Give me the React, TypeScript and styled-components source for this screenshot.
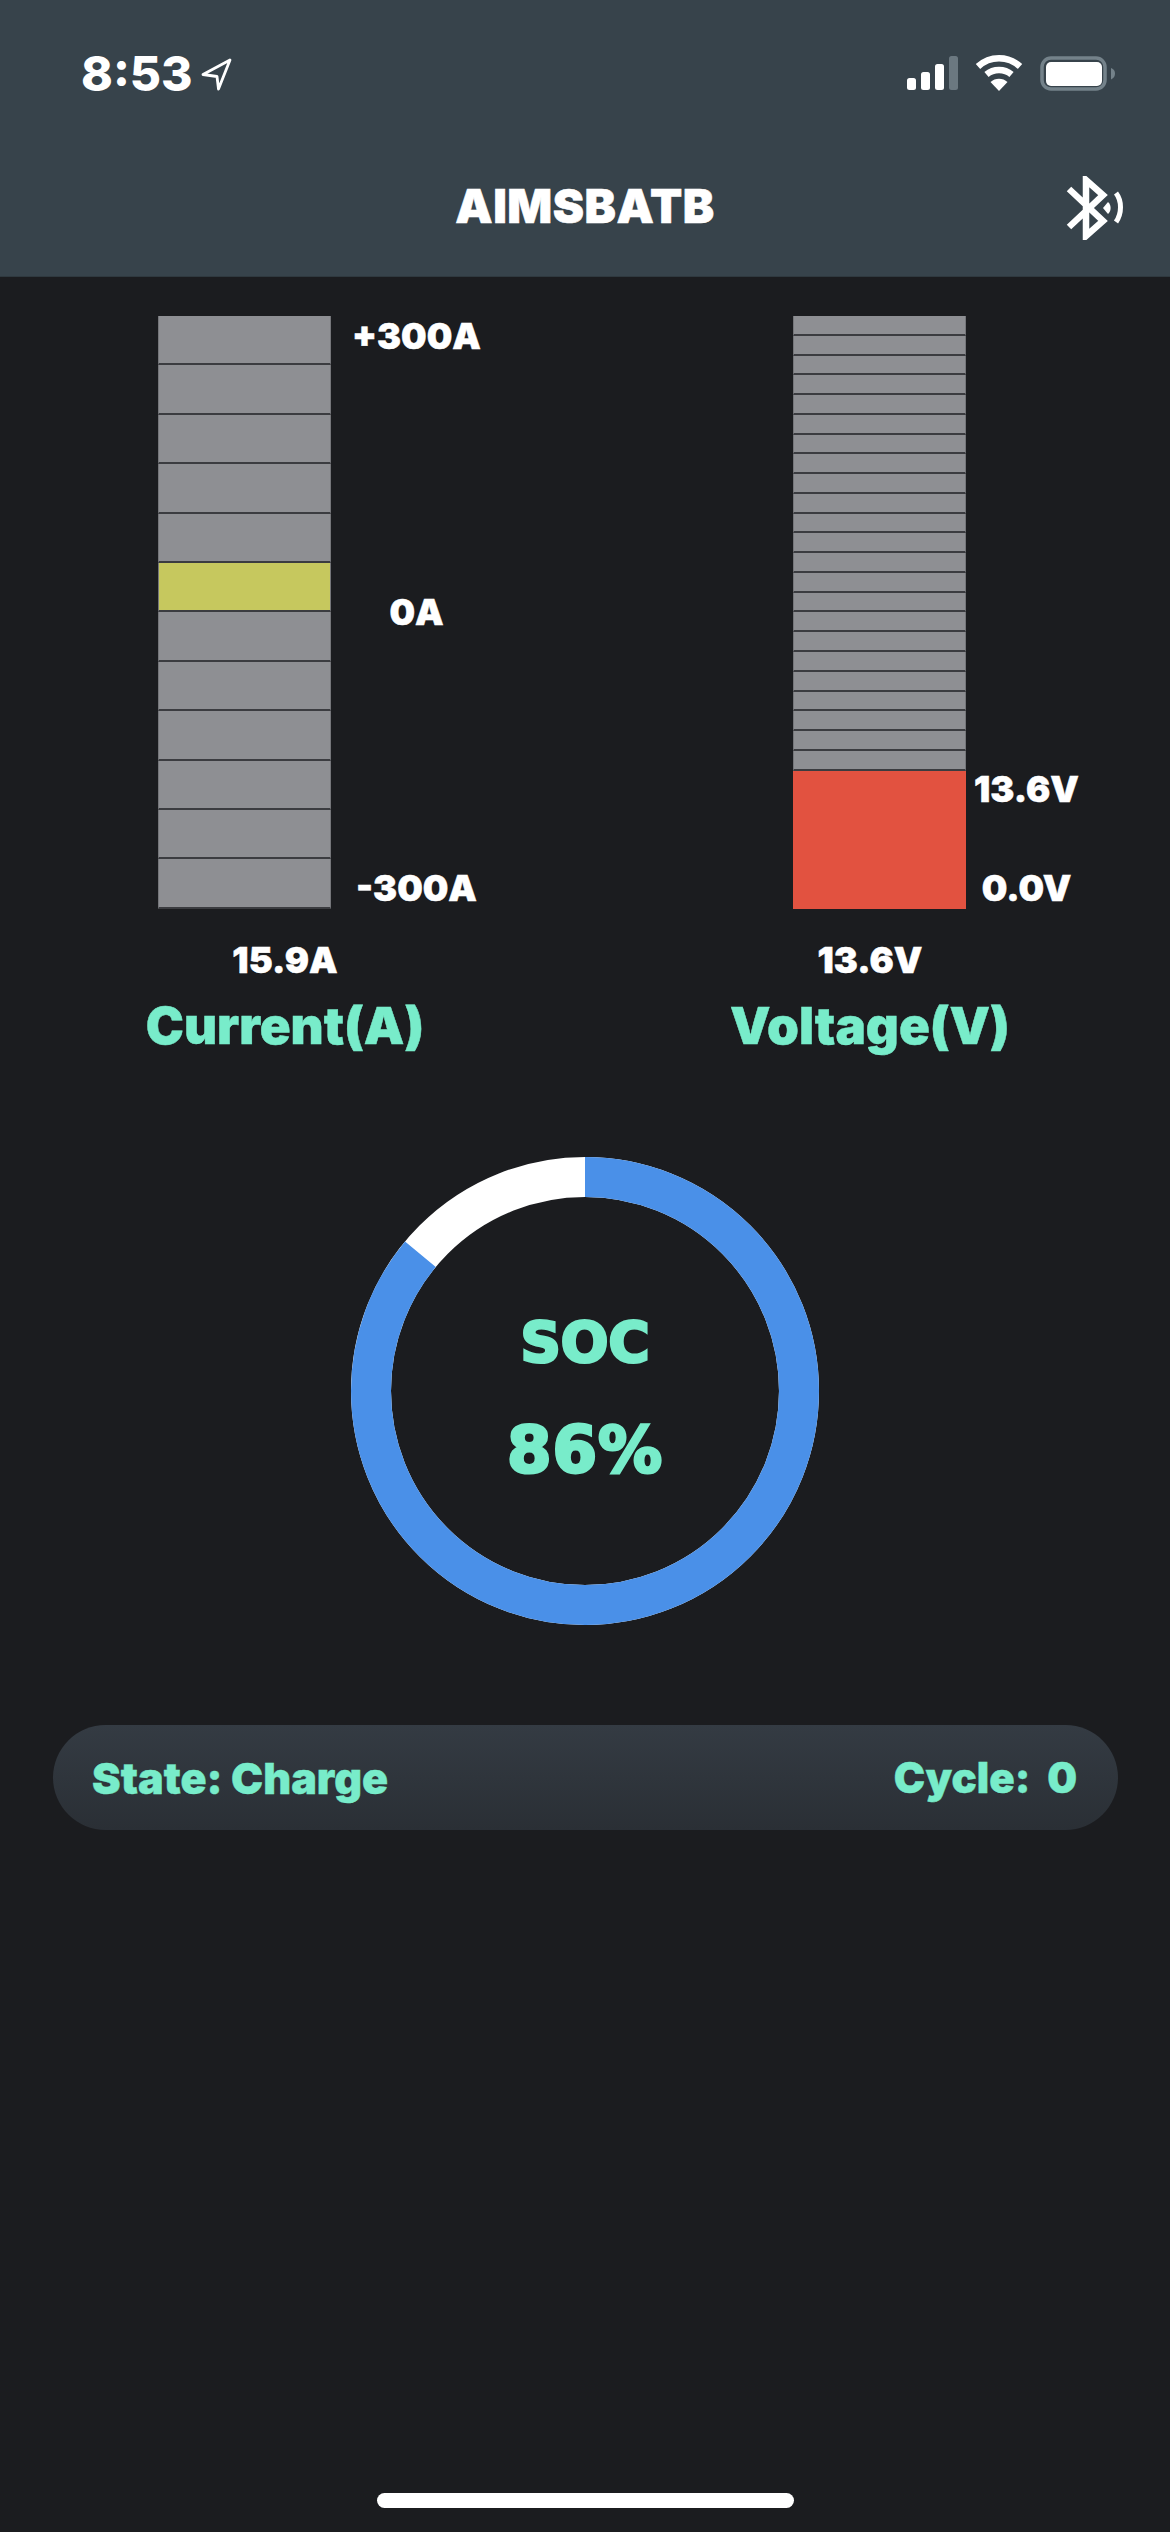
import styled, { createGlobalStyle } from 'styled-components'

const GlobalStyle = createGlobalStyle`
  html, body {
    margin: 0;
    padding: 0;
    background: #1b1c1f;
  }

  * {
    box-sizing: border-box;
  }
`

const currentCells = Array.from({ length: 12 }, (_, i) => i)
const voltageCells = Array.from({ length: 23 }, (_, i) => i)

const SocRing = () => {
  const radius = 214
  const length = 2 * Math.PI * radius
  const filled = length * 0.86

  return (
    <svg width="468" height="468" viewBox="0 0 468 468">
      <circle cx="234" cy="234" r={radius} fill="none" stroke="#ffffff" strokeWidth="40" />
      <circle
        cx="234"
        cy="234"
        r={radius}
        fill="none"
        stroke="#4a90e8"
        strokeWidth="40"
        strokeDasharray={`${filled} ${length}`}
        transform="rotate(-90 234 234)"
      />
    </svg>
  )
}

const App = () => {
  return (
    <Page>
      <GlobalStyle />
      <Header>
        <StatusBar>
          <Clock>
            <Time>8:53</Time>
            <svg width="34" height="36" viewBox="0 0 34 36">
              <path
                d="M30 4 L3 18.500 L17 20.500 L18.500 33 Z"
                fill="none"
                stroke="#fff"
                strokeWidth="2.800"
                strokeLinejoin="round"
              />
            </svg>
          </Clock>
          <StatusIcons>
            <svg width="51" height="34" viewBox="0 0 51 34">
              <rect x="0" y="22" width="9" height="12" rx="2.500" fill="#fff" />
              <rect x="14" y="16" width="9" height="18" rx="2.500" fill="#fff" />
              <rect x="28" y="8" width="9" height="26" rx="2.500" fill="#fff" />
              <rect x="42" y="0" width="9" height="34" rx="2.500" fill="#6b7880" />
            </svg>
            <svg width="48" height="36" viewBox="0 0 48 36">
              <path d="M3 11.500 C15 0.500 33 0.500 45 11.500" fill="none" stroke="#fff" strokeWidth="6.500" />
              <path d="M11.500 19.500 C18.500 13.500 29.500 13.500 36.500 19.500" fill="none" stroke="#fff" strokeWidth="6.500" />
              <path d="M24 36 L15.500 27 C20 22.500 28 22.500 32.500 27 Z" fill="#fff" />
            </svg>
            <svg width="75" height="35" viewBox="0 0 75 35">
              <rect x="2" y="2" width="63" height="31" rx="9" fill="none" stroke="#74828a" strokeWidth="3.500" />
              <rect x="6" y="6" width="56" height="24" rx="5" fill="#fff" />
              <path d="M71 12 C74 13 75 15 75 17.500 C75 20 74 22 71 23.500 Z" fill="#74828a" />
            </svg>
          </StatusIcons>
        </StatusBar>
        <TitleBar>
          <Title>AIMSBATB</Title>
          <BluetoothIcon width="57" height="64" viewBox="0 0 57 64">
            <path d="M3 13 L37 45 L20 60 L20 4 L37 19 L3 51" fill="none" stroke="#fff" strokeWidth="6.500" />
            <path d="M37 32 L42 26 C45.500 29 45.500 35 42 38 Z" fill="#fff" />
            <path d="M50 17 C56 25 56 37 50 46" fill="none" stroke="#fff" strokeWidth="5" />
          </BluetoothIcon>
        </TitleBar>
      </Header>

      <Gauges>
        <Gauge>
          <BarRow $inset={158}>
            <Bar>
              {currentCells.map((i) => (
                <Cell key={i} $color={i === 5 ? '#c6c85e' : '#8e8f93'} $share={1 / 12} />
              ))}
            </Bar>
            <CurrentScale>
              <ScaleLabel>+300A</ScaleLabel>
              <ScaleLabel>0A</ScaleLabel>
              <ScaleLabel>-300A</ScaleLabel>
            </CurrentScale>
          </BarRow>
          <Readout>15.9A</Readout>
          <Caption>Current(A)</Caption>
        </Gauge>

        <Gauge>
          <BarRow $inset={223}>
            <Bar>
              {voltageCells.map((i) => (
                <Cell key={i} $color="#8e8f93" $share={1 / 30} />
              ))}
              <Fill $share={7 / 30} />
            </Bar>
            <VoltageScale>
              <ScaleLabel>13.6V</ScaleLabel>
              <ScaleLabel>0.0V</ScaleLabel>
            </VoltageScale>
          </BarRow>
          <Readout>13.6V</Readout>
          <Caption>Voltage(V)</Caption>
        </Gauge>
      </Gauges>

      <RingWrap>
        <SocRing />
        <RingText>
          <SocLabel>SOC</SocLabel>
          <SocValue>86%</SocValue>
        </RingText>
      </RingWrap>

      <InfoPill>
        <span>State: Charge</span>
        <CycleText>Cycle:&nbsp; 0</CycleText>
      </InfoPill>

      <HomeIndicator />
    </Page>
  )
}

export default App

const Page = styled.div`
  position: relative;
  width: 1170px;
  height: 2532px;
  overflow: hidden;
  background: #1b1c1f;
  color: #fff;
  font-family: Inter, 'Liberation Sans', sans-serif;
`

const Header = styled.header`
  height: 277px;
  background: #37434b;
  box-shadow: inset 0 -1px 0 #2f393f;
`

const StatusBar = styled.div`
  display: flex;
  justify-content: space-between;
  align-items: flex-start;
  height: 176px;
  padding: 55px 55px 0 81px;
`

const Clock = styled.div`
  display: flex;
  align-items: center;
  gap: 7px;
`

const Time = styled.span`
  font-size: 48px;
  font-weight: 800;
  line-height: 38px;
`

const StatusIcons = styled.div`
  display: flex;
  align-items: center;
  gap: 17px;
`

const TitleBar = styled.div`
  position: relative;
  display: flex;
  justify-content: center;
  height: 101px;
`

const Title = styled.h1`
  margin: 2px 0 0;
  font-size: 47px;
  font-weight: 900;
  line-height: 56px;
  letter-spacing: 0.5px;
  -webkit-text-stroke: 0.6px #fff;
`

const BluetoothIcon = styled.svg`
  position: absolute;
  top: 0;
  right: 47px;
`

const Gauges = styled.section`
  display: grid;
  grid-template-columns: 570px 600px;
  padding-top: 39px;
`

const Gauge = styled.div`
  display: flex;
  flex-direction: column;
  align-items: center;
`

const BarRow = styled.div<{ $inset: number }>`
  display: flex;
  align-self: stretch;
  height: 593px;
  padding-left: ${(p) => p.$inset}px;
`

const Bar = styled.div`
  display: flex;
  flex-direction: column;
  flex: none;
  width: 173px;
  height: 593px;
`

const Cell = styled.div<{ $color: string; $share: number }>`
  height: ${(p) => p.$share * 100}%;
  background: ${(p) => p.$color};
  border: 1px solid #75767a;
  border-top: 0;
  border-bottom: 2px solid #3b3c40;
`

const Fill = styled.div<{ $share: number }>`
  height: ${(p) => p.$share * 100}%;
  background: #e25240;
`

const CurrentScale = styled.div`
  display: flex;
  flex-direction: column;
  justify-content: space-between;
  align-items: center;
  width: 171px;
  padding: 3px 0 4px;
`

const VoltageScale = styled.div`
  display: flex;
  flex-direction: column;
  justify-content: flex-end;
  align-items: center;
  gap: 65px;
  width: 121px;
  padding-bottom: 4px;
`

const ScaleLabel = styled.span`
  font-size: 36px;
  font-weight: 900;
  line-height: 34px;
  -webkit-text-stroke: 0.5px #fff;
`

const Readout = styled.div`
  margin-top: 34px;
  font-size: 36px;
  font-weight: 900;
  line-height: 34px;
  -webkit-text-stroke: 0.5px #fff;
`

const Caption = styled.h2`
  margin: 19px 0 0;
  color: #78ecca;
  font-size: 51px;
  font-weight: 900;
  line-height: 60px;
  -webkit-text-stroke: 0.5px #78ecca;
`

const RingWrap = styled.div`
  position: relative;
  width: 468px;
  height: 468px;
  margin: 101px auto 0;

  svg {
    display: block;
  }
`

const RingText = styled.div`
  position: absolute;
  inset: 0;
  display: flex;
  flex-direction: column;
  align-items: center;
  padding-top: 152px;
  color: #78ecca;
  font-family: 'DejaVu Sans', sans-serif;
  font-weight: 700;
  -webkit-text-stroke: 3px #78ecca;
`

const SocLabel = styled.div`
  font-size: 56px;
  line-height: 66px;
`

const SocValue = styled.div`
  margin-top: 40px;
  font-size: 64px;
  line-height: 70px;
  letter-spacing: 1px;
`

const InfoPill = styled.div`
  display: flex;
  justify-content: space-between;
  align-items: center;
  width: 1065px;
  height: 105px;
  margin: 100px 0 0 53px;
  padding: 0 41px 0 39px;
  border-radius: 53px;
  background: linear-gradient(#343b43, #2a2f35);
  color: #78ecca;
  font-size: 43px;
  font-weight: 900;
  -webkit-text-stroke: 0.4px #78ecca;
`

const CycleText = styled.span`
  font-size: 42px;
  white-space: pre;
`

const HomeIndicator = styled.div`
  position: absolute;
  left: 377px;
  top: 2493px;
  width: 417px;
  height: 15px;
  border-radius: 8px;
  background: #fff;
`
